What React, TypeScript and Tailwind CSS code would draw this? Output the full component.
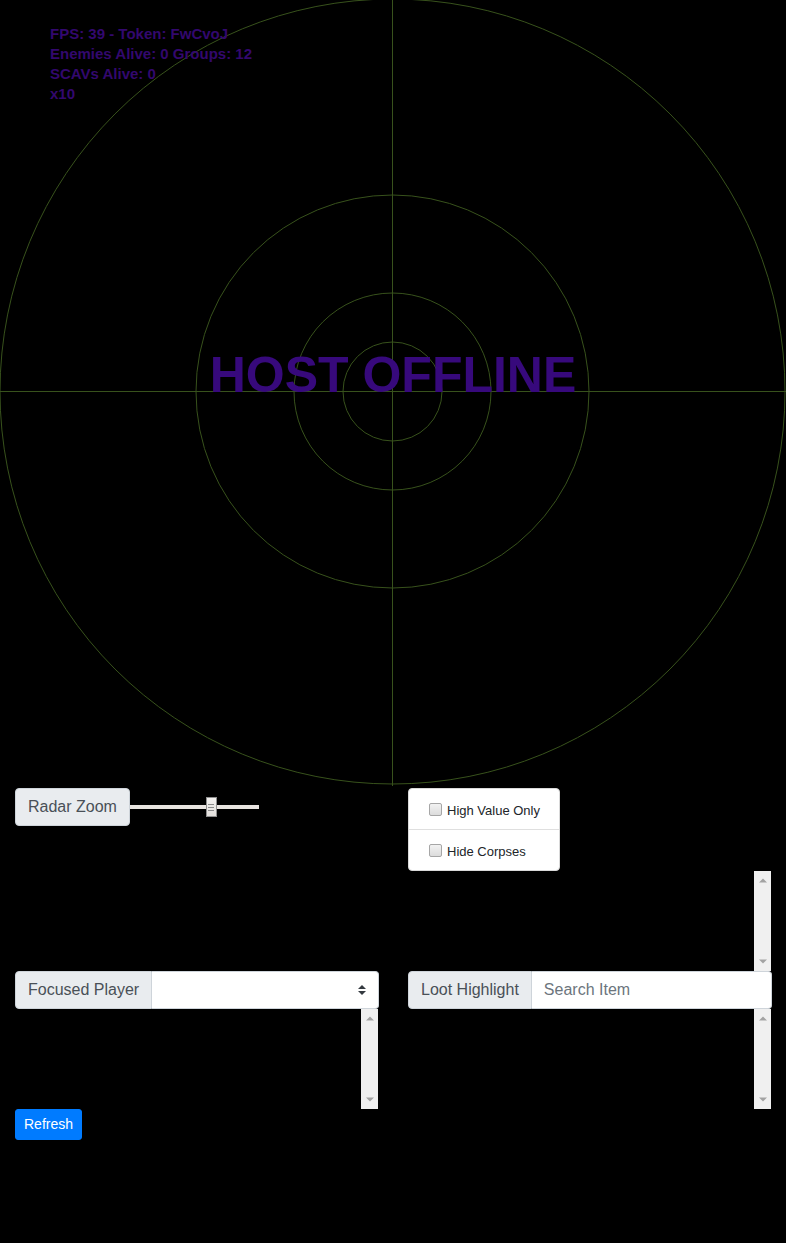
import React from "react";

const FONT = { fontFamily: '"Liberation Sans", Arial, sans-serif' };

function FakeScroll({ h, className = "" }: { h: string; className?: string }) {
  return (
    <div className={`flex justify-end ${h} ${className}`}>
      <div className="w-[17px] h-full bg-[#f0f0f0] flex flex-col items-center justify-between py-[7px]">
        <svg width="8" height="5" viewBox="0 0 8 5">
          <path d="M0 4.5 L4 0.5 L8 4.5 Z" fill="#a3a3a3" />
        </svg>
        <svg width="8" height="5" viewBox="0 0 8 5">
          <path d="M0 0.5 L4 4.5 L8 0.5 Z" fill="#a3a3a3" />
        </svg>
      </div>
    </div>
  );
}

function Radar() {
  const cx = 392.5;
  const cy = 391.5;
  const stroke = "#38521c";
  return (
    <div className="relative w-[786px] h-[786px]">
      <svg width="786" height="786" viewBox="0 0 786 786" className="block">
        <circle cx={cx} cy={cy} r={392.5} fill="none" stroke={stroke} strokeWidth="1" />
        <circle cx={cx} cy={cy} r={196.5} fill="none" stroke={stroke} strokeWidth="1" />
        <circle cx={cx} cy={cy} r={98.5} fill="none" stroke={stroke} strokeWidth="1" />
        <circle cx={cx} cy={cy} r={49.5} fill="none" stroke={stroke} strokeWidth="1" />
        <line x1={cx} y1="0" x2={cx} y2="786" stroke={stroke} strokeWidth="1" />
        <line x1="0" y1={cy} x2="786" y2={cy} stroke={stroke} strokeWidth="1" />
      </svg>
      <div
        className="absolute left-[50px] top-[24px] text-[15px] leading-[20px] font-bold text-[#33086e]"
        style={FONT}
      >
        <div>FPS: 39 - Token: FwCvoJ</div>
        <div>Enemies Alive: 0 Groups: 12</div>
        <div>SCAVs Alive: 0</div>
        <div>x10</div>
      </div>
      <div
        className="absolute left-0 right-0 top-[350px] text-center text-[50px] leading-[50px] font-bold text-[#37097c]"
        style={FONT}
      >
        HOST OFFLINE
      </div>
    </div>
  );
}

function GroupLabel({ children, rounded }: { children: React.ReactNode; rounded: string }) {
  return (
    <div
      className={`h-[38px] px-[12px] flex items-center bg-[#e9ecef] border border-[#ced4da] text-[#495057] text-[16px] ${rounded}`}
    >
      {children}
    </div>
  );
}

function Checkbox() {
  return (
    <div className="w-[13px] h-[13px] rounded-[2px] border border-[#a6a6a6] bg-gradient-to-b from-[#f2f2f2] to-[#dcdcdc] shrink-0" />
  );
}

export default function App() {
  return (
    <div className="bg-black min-h-[1243px] w-[786px]" style={FONT}>
      <Radar />
      <div className="flex mt-[2px]">
        {/* Left column */}
        <div className="w-[393px] px-[15px] flex flex-col">
          <div className="h-[183px] flex items-start">
            <GroupLabel rounded="rounded-[4px]">Radar Zoom</GroupLabel>
            <div className="relative w-[129px] h-[38px] flex items-center">
              <div className="w-full h-[4px] bg-[#e8e4e0]" />
              <div className="absolute left-[76px] top-[9px] w-[11px] h-[20px] border border-[#8f8f8f] bg-gradient-to-b from-[#f3f1ef] to-[#e2dfdc] flex flex-col items-center justify-center gap-[2px]">
                <div className="w-[6px] h-[1px] bg-[#8a8a8a]" />
                <div className="w-[6px] h-[1px] bg-[#8a8a8a]" />
                <div className="w-[6px] h-[1px] bg-[#8a8a8a]" />
              </div>
            </div>
          </div>
          <div className="flex mr-[-1px]">
            <GroupLabel rounded="rounded-l-[4px]">Focused Player</GroupLabel>
            <div className="flex-1 h-[38px] bg-white border border-[#ced4da] border-l-0 rounded-r-[4px] flex items-center justify-end pr-[12px]">
              <svg width="8" height="10" viewBox="0 0 4 5">
                <path d="M2 0L0 2h4zm0 5L0 3h4z" fill="#343a40" />
              </svg>
            </div>
          </div>
          <FakeScroll h="h-[100px]" />
          <div>
            <button className="h-[31px] px-[8px] bg-[#007bff] text-white text-[14px] rounded-[3px] border border-[#007bff]">
              Refresh
            </button>
          </div>
        </div>

        {/* Right column */}
        <div className="w-[393px] px-[15px] flex flex-col">
          <div className="w-[152px] bg-white border border-[#d9d9d9] rounded-[4px] text-[13px] text-[#212529]">
            <div className="h-[41px] flex items-center gap-[5px] pl-[20px] border-b border-[#dfdfdf]">
              <Checkbox />
              <span className="leading-none pt-[2px]">High Value Only</span>
            </div>
            <div className="h-[40px] flex items-center gap-[5px] pl-[20px]">
              <Checkbox />
              <span className="leading-none pt-[2px]">Hide Corpses</span>
            </div>
          </div>
          <FakeScroll h="h-[100px]" />
          <div className="flex mr-[-1px]">
            <GroupLabel rounded="rounded-l-[4px]">Loot Highlight</GroupLabel>
            <div className="flex-1 h-[38px] bg-white border border-[#ced4da] border-l-0 rounded-r-[4px] flex items-center pl-[12px] text-[16px] text-[#6c757d]">
              Search Item
            </div>
          </div>
          <FakeScroll h="h-[100px]" />
        </div>
      </div>
    </div>
  );
}
